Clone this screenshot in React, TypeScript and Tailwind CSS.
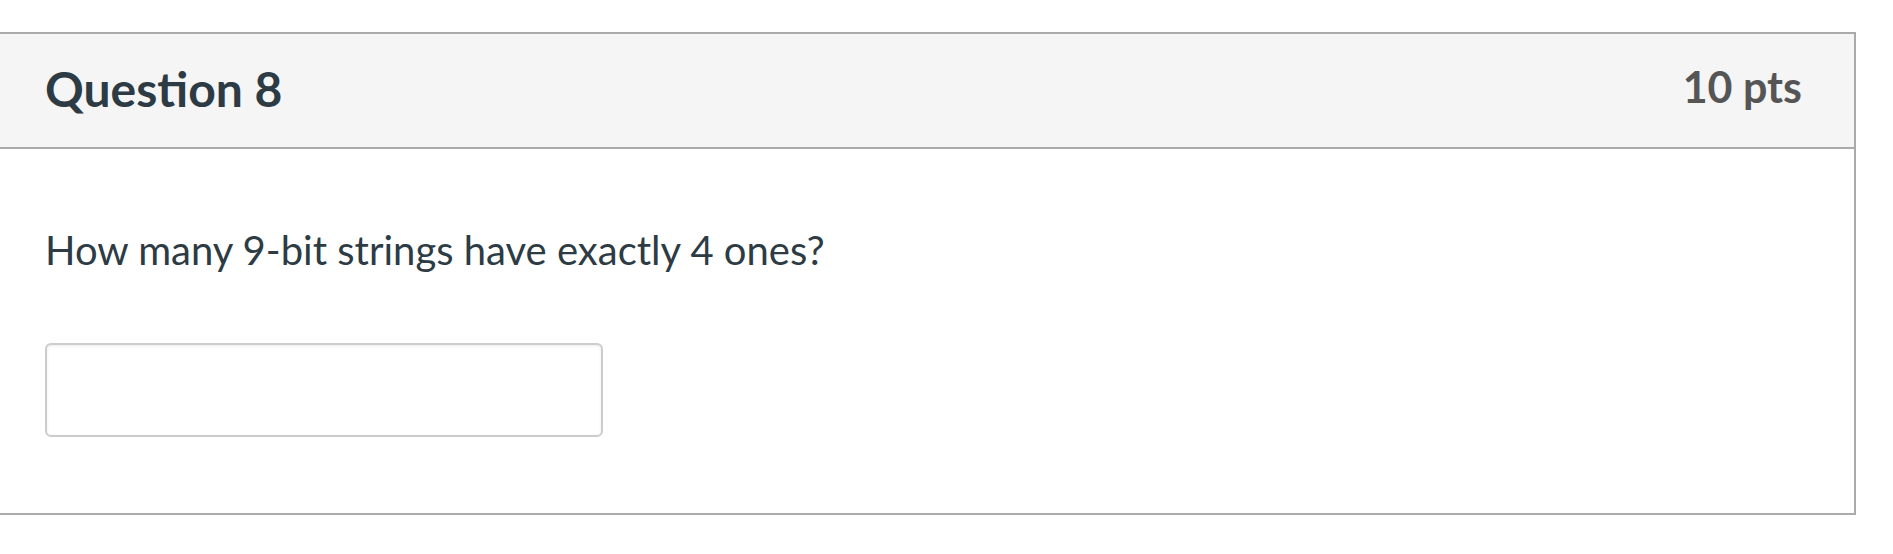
import React from "react";

export default function App() {
  return (
    <div className="min-h-[554px] w-[1893px] bg-white pt-[32px]" style={{ fontFamily: "Lato, 'Open Sans', sans-serif" }}>
      <div className="w-[1856px] border-y-2 border-r-2 border-[#aaaaaa]">
        <div className="flex h-[115px] items-start justify-between border-b-2 border-[#aaaaaa] bg-[#f5f5f5] pl-[45px] pr-[52px] pt-[26px]">
          <h2 className="text-[48px] font-bold leading-[58px] text-[#2d3b45]">Question 8</h2>
          <div className="mt-[2px] text-[43px] font-bold leading-[50px] text-[#555555]">10 pts</div>
        </div>
        <div className="pl-[45px] pt-[77px] pb-[76px]">
          <p className="text-[40px] leading-[48px] text-[#2d3b45]">How many 9-bit strings have exactly 4 ones?</p>
          <input
            type="text"
            aria-label="Answer"
            className="mt-[69px] block h-[94px] w-[558px] rounded-[6px] border-2 border-[#cccccc] bg-white shadow-[inset_0_1px_3px_rgba(0,0,0,0.08)] outline-none"
          />
        </div>
      </div>
    </div>
  );
}
